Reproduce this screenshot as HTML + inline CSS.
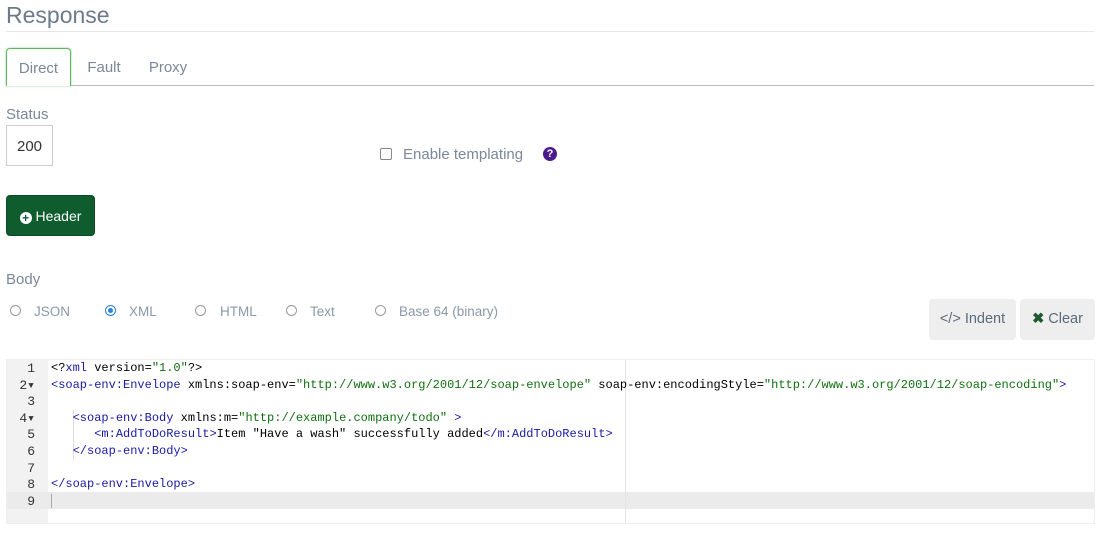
<!DOCTYPE html>
<html><head><meta charset="utf-8"><style>
body{margin:0;background:#fff;font-family:"Liberation Sans",sans-serif;color:#7a8899;width:1100px;height:537px;overflow:hidden;position:relative}
.a{position:absolute}
h1{position:absolute;left:6px;top:2px;margin:0;font-weight:normal;font-size:23px;color:#6c7a89}
.hr{left:6px;right:6px;top:31px;height:1px;background:#e5e5e5}
.tabline{left:6px;right:6px;top:85px;height:1px;background:#bbb}
.tab{top:48px;height:38px;box-sizing:border-box;font-size:15px;line-height:40px;text-align:center;color:#7a8899}
.active{left:6px;width:65px;border:1px solid #5cb85c;border-bottom:none;border-radius:4px 4px 0 0;background:#fff;box-shadow:0 0 2px #9c9}
.lbl{font-size:15px;color:#7a8899}
.inp{left:6px;top:125px;width:47px;height:41px;box-sizing:border-box;border:1px solid #ccc;font-size:15px;color:#333;line-height:41px;text-align:center}
.btn{left:6px;top:195px;width:89px;height:41px;background:#0f5c2e;border-radius:4px;color:#fff;font-size:14px;line-height:41px;text-align:center;box-sizing:border-box;border:1px solid #0a4a24}
.radio{width:11px;height:11px;border:1px solid #999;border-radius:50%;box-sizing:border-box;top:305px}
.rl{top:304px;font-size:13.5px;color:#8a98a8}
.gbtn{top:299px;height:41px;background:#eee;border-radius:4px;font-size:14.5px;line-height:41px;text-align:center;color:#5b6b7b}
.ed{left:6px;top:359px;width:1089px;height:165px;border:1px solid #eee;box-sizing:border-box;font-family:"Liberation Mono",monospace;font-size:12px}
.gut{left:0;top:0;width:41px;height:100%;background:#f2f2f2}
.ln{position:absolute;left:0;width:28px;text-align:right;color:#333;height:17px;line-height:17px;font-size:13px}
.cl{position:absolute;left:44px;height:17px;line-height:17px;white-space:pre;color:#000}
.t{color:#1a1aa6}.s{color:#107010}
</style></head><body>
<h1>Response</h1>
<div class="a hr"></div>
<div class="a tabline"></div>
<div class="a tab active">Direct</div>
<div class="a tab" style="left:82px;width:44px">Fault</div>
<div class="a tab" style="left:145px;width:46px">Proxy</div>
<div class="a lbl" style="left:6px;top:106px">Status</div>
<div class="a inp">200</div>
<div class="a" style="left:380px;top:148px;width:12px;height:12px;border:1px solid #888;border-radius:2px;box-sizing:border-box"></div>
<div class="a lbl" style="left:403px;top:146px">Enable templating</div>
<div class="a" style="left:543px;top:147px;width:14px;height:14px;border-radius:50%;background:#4b1a8c;color:#fff;font-size:11px;font-weight:bold;line-height:14px;text-align:center">?</div>
<div class="a btn"><span style="display:inline-block;width:12px;height:12px;border-radius:50%;background:#fff;color:#0f5c2e;font-size:12px;line-height:12px;font-weight:bold;vertical-align:-1px">+</span> Header</div>
<div class="a lbl" style="left:6px;top:271px">Body</div>
<div class="a radio" style="left:10px"></div><div class="a rl" style="left:34px">JSON</div>
<div class="a radio" style="left:105px;border-color:#2a7fe0"><div style="position:absolute;left:2px;top:2px;width:5px;height:5px;border-radius:50%;background:#2a7fe0"></div></div><div class="a rl" style="left:129px">XML</div>
<div class="a radio" style="left:195px"></div><div class="a rl" style="left:220px">HTML</div>
<div class="a radio" style="left:286px"></div><div class="a rl" style="left:310px">Text</div>
<div class="a radio" style="left:375px"></div><div class="a rl" style="left:399px">Base 64 (binary)</div>
<div class="a gbtn" style="left:929px;width:87px">&lt;/&gt; Indent</div>
<div class="a gbtn" style="left:1020px;width:75px"><b style="color:#1d5a2e">✖</b> Clear</div>
<div class="a ed">
<div class="a gut"></div>
<div class="a" style="left:0;right:0;top:132px;height:17px;background:#ebebeb"></div>
<div class="a" style="left:618px;top:0;bottom:0;width:1px;background:#e5e5e5"></div>
<div class="a" style="left:66px;top:50px;height:50px;width:1px;background:#ddd"></div>
<div class="ln" style="top:0">1</div><div class="ln" style="top:16.6px">2▾</div><div class="ln" style="top:33.2px">3</div><div class="ln" style="top:49.8px">4▾</div><div class="ln" style="top:66.4px">5</div><div class="ln" style="top:83px">6</div><div class="ln" style="top:99.6px">7</div><div class="ln" style="top:116.2px">8</div><div class="ln" style="top:132.8px">9</div>
<div class="cl" style="top:0">&lt;?<span class="t">xml</span> version=<span class="s">"1.0"</span>?&gt;</div>
<div class="cl" style="top:16.6px"><span class="t">&lt;soap-env:Envelope</span> xmlns:soap-env=<span class="s">"http://www.w3.org/2001/12/soap-envelope"</span> soap-env:encodingStyle=<span class="s">"http://www.w3.org/2001/12/soap-encoding"</span><span class="t">&gt;</span></div>
<div class="cl" style="top:49.8px">   <span class="t">&lt;soap-env:Body</span> xmlns:m=<span class="s">"http://example.company/todo"</span> <span class="t">&gt;</span></div>
<div class="cl" style="top:66.4px">      <span class="t">&lt;m:AddToDoResult&gt;</span>Item "Have a wash" successfully added<span class="t">&lt;/m:AddToDoResult&gt;</span></div>
<div class="cl" style="top:83px">   <span class="t">&lt;/soap-env:Body&gt;</span></div>
<div class="cl" style="top:116.2px"><span class="t">&lt;/soap-env:Envelope&gt;</span></div>
<div class="a" style="left:44px;top:134px;width:1px;height:14px;background:#aaa"></div>
</div>
</body></html>
